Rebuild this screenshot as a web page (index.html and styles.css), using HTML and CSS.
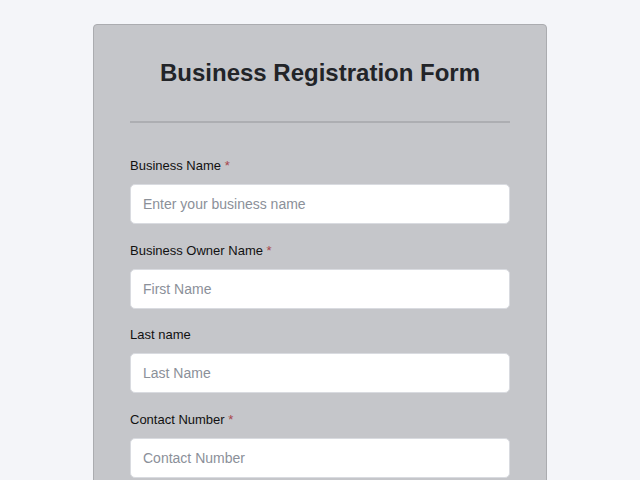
FILE: index.html
```html
<!DOCTYPE html>
<html lang="en">
  <head>
    <meta charset="UTF-8" />
    <meta name="viewport" content="width=device-width, initial-scale=1.0" />
    <title>Business Registration Form</title>
    <link rel="stylesheet" href="styles.css">
  </head>
  <body>
    <div class="form-container">
      <h1>Business Registration Form</h1>
      <hr class="divider" />
      <form>
        <div class="form-group">
          <label for="businessName">Business Name <span class="required">*</span></label>
          <input type="text" id="businessName" class="input" placeholder="Enter your business name" />
        </div>
        <div class="form-group">
          <label for="firstName">Business Owner Name <span class="required">*</span></label>
          <input type="text" id="firstName" class="input" placeholder="First Name" />
        </div>
        <div class="form-group">
          <label for="lastName">Last name</label>
          <input type="text" id="lastName" class="input" placeholder="Last Name" />
        </div>
        <div class="form-group">
          <label for="contactNumber">Contact Number <span class="required">*</span></label>
          <input type="tel" id="contactNumber" class="input" placeholder="Contact Number" />
        </div>
      </form>
    </div>
  </body>
</html>
```

FILE: styles.css
```css
html,
body {
  margin: 0;
  font-family: "Liberation Sans", Arial, Helvetica, sans-serif;
  background: #f4f5f9;
  color: #111;
}
body {
  padding-top: 24px;
}
h1 {
  margin: 0 0 34px;
  font-size: 24px;
  font-weight: 700;
  text-align: center;
  color: #222428;
}
.form-container {
  width: 380px;
  margin: 0 auto;
  padding: 34px 36px 40px;
  background: #c5c6ca;
  border: 1px solid #abacb0;
  border-radius: 4px;
}
.divider {
  margin: 0 0 33px;
  border: none;
  height: 2px;
  background: #adaeb2;
}
.form-group {
  margin-bottom: 16.7px;
}
.form-group label {
  display: block;
  font-size: 13px;
  line-height: 20px;
  margin-bottom: 8px;
  color: #111;
}
.required {
  color: #a8454a;
}
.input {
  display: block;
  box-sizing: border-box;
  width: 100%;
  height: 40px;
  padding: 0 12px;
  font-family: inherit;
  font-size: 14px;
  background: #fff;
  border: 1px solid #d9dbe0;
  border-radius: 5px;
  outline: none;
}
.input::placeholder {
  color: #8b9099;
}
```
